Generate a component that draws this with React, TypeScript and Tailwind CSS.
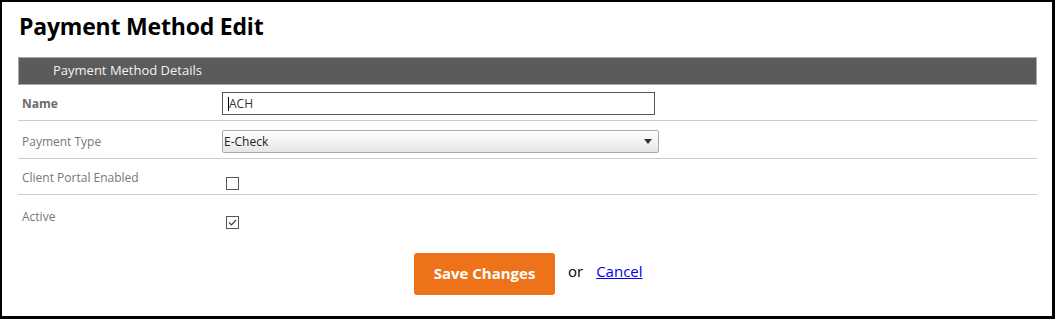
import React from "react";

export default function App() {
  const font = { fontFamily: '"Open Sans", "Noto Sans", "Liberation Sans", sans-serif' };
  return (
    <div className="w-[1055px] h-[319px] bg-white box-border border-l-2 border-t-2 border-r-[3px] border-b-[3px] border-black overflow-hidden" style={font}>
      <div className="pl-[16px] pr-[15px]">
        <h1 className="m-0 pt-[9px] h-[55px] text-[23px] leading-[30px] font-bold text-black tracking-[-0.2px] pl-[1px]">
          Payment Method Edit
        </h1>
        <div className="h-[28px] bg-[#5b5b5b] border border-[#a8a8a8] flex items-center pl-[34px] text-[13px] text-[#f2f2f2]">
          Payment Method Details
        </div>

        {/* Name */}
        <div className="h-[36px] border-b border-[#cccccc] flex items-start">
          <div className="w-[204px] pl-[4px] mt-[11px] text-[12px] leading-[16px] font-bold text-[#6b6b6b]">Name</div>
          <div className="mt-[7px] w-[433px] h-[23px] border border-[#555555] bg-white flex items-center pl-[5px] text-[12px] text-[#333]">
            <span className="inline-block w-[1px] h-[14px] bg-black mr-[0px]"></span>
            ACH
          </div>
        </div>

        {/* Payment Type */}
        <div className="h-[38px] border-b border-[#cccccc] flex items-start">
          <div className="w-[204px] pl-[4px] mt-[13px] text-[12px] leading-[16px] text-[#777777]">Payment Type</div>
          <div className="mt-[9px] w-[437px] h-[23px] border border-[#aaaaaa] rounded-[2px] bg-gradient-to-b from-white to-[#e6e6e6] flex items-center justify-between pl-[1px] pr-[6px] text-[12px] text-[#222]">
            <span>E-Check</span>
            <svg width="8" height="5" viewBox="0 0 8 5"><path d="M0 0h8L4 5z" fill="#333" /></svg>
          </div>
        </div>

        {/* Client Portal Enabled */}
        <div className="h-[36px] border-b border-[#cccccc] flex items-start">
          <div className="w-[204px] pl-[4px] mt-[11px] text-[12px] leading-[16px] text-[#777777]">Client Portal Enabled</div>
          <div className="mt-[18px] ml-[4px] w-[13px] h-[13px] border border-[#555555] bg-white"></div>
        </div>

        {/* Active */}
        <div className="h-[50px] flex items-start">
          <div className="w-[204px] pl-[4px] mt-[14px] text-[12px] leading-[16px] text-[#777777]">Active</div>
          <div className="mt-[21px] ml-[4px] w-[13px] h-[13px] border border-[#555555] bg-white flex items-center justify-center">
            <svg width="9" height="7" viewBox="0 0 9 7"><path d="M1 3.5L3.5 6 8 1" stroke="#444" strokeWidth="1.2" fill="none" /></svg>
          </div>
        </div>

        <div className="flex items-center pl-[396px] mt-[8px]">
          <button className="w-[141px] h-[42px] rounded-[3px] bg-[#ee7219] text-white font-bold text-[15px] pb-[1px]" style={font}>
            Save Changes
          </button>
          <span className="ml-[13px] mb-[5px] text-[15px] text-black">or</span>
          <a href="#" className="ml-[13px] mb-[5px] text-[15px] text-[#0000ee] underline">Cancel</a>
        </div>
      </div>
    </div>
  );
}
